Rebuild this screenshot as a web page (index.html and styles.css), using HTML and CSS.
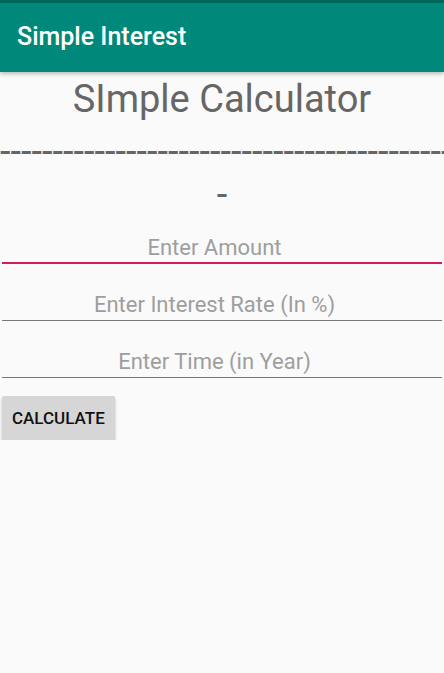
FILE: index.html
```html
<!DOCTYPE html>
<html lang="en">
<head>
    <meta charset="UTF-8">
    <meta name="viewport" content="width=device-width, initial-scale=1.0">
    <title>Simple Interest</title>
    <link rel="stylesheet" href="styles.css">
</head>
<body>
    <div class="status-bar"></div>
    <header class="app-bar">Simple Interest</header>

    <main class="content">
        <h1 class="title">SImple Calculator</h1>
        <div class="divider">----------------------------------------------------</div>
        <div class="result">-</div>

        <form id="interestForm">
            <input type="number" class="field active" placeholder="Enter Amount">
            <input type="number" class="field" placeholder="Enter Interest Rate (In %)">
            <input type="number" class="field" placeholder="Enter Time (in Year)">
            <button type="button" class="calc-btn">CALCULATE</button>
        </form>
    </main>
</body>
</html>
```

FILE: styles.css
```css
body {
    margin: 0;
    font-family: Roboto, "Liberation Sans", sans-serif;
    background-color: #fafafa;
    color: #333;
}

.status-bar {
    height: 3px;
    background-color: #00695c;
}

.app-bar {
    height: 69px;
    box-sizing: border-box;
    padding: 0 17px 2px;
    display: flex;
    align-items: center;
    background-color: #00897b;
    color: #ffffff;
    font-size: 25px;
    font-weight: 500;
    box-shadow: 0 2px 4px rgba(0, 0, 0, 0.25);
}

.content {
    padding: 0 2px;
}

.title {
    margin: 5px 0 0;
    text-align: center;
    font-size: 38px;
    font-weight: 400;
    color: #666666;
    line-height: 44px;
}

/* linha de hifens, cortada na borda */
.divider {
    margin: 0 -2px;
    overflow: hidden;
    white-space: nowrap;
    font-size: 38px;
    line-height: 60px;
    color: #666666;
}

.result {
    text-align: center;
    font-size: 38px;
    line-height: 26px;
    color: #666666;
}

.field {
    display: block;
    width: 100%;
    box-sizing: border-box;
    height: 57px;
    padding: 28px 0 4px;
    border: none;
    border-bottom: 1px solid #777777;
    background: transparent;
    text-align: center;
    font-family: Roboto, "Liberation Sans", sans-serif;
    font-size: 22px;
    outline: none;
}

.field::placeholder {
    color: #9e9e9e;
}

.field.active {
    padding-bottom: 3px;
    border-bottom: 2px solid #d81b60;
}

.calc-btn {
    margin-top: 18px;
    padding: 0 10px;
    height: 44px;
    border: none;
    border-radius: 2px;
    background-color: #d6d6d6;
    color: #111111;
    font-family: Roboto, "Liberation Sans", sans-serif;
    font-size: 17px;
    font-weight: 500;
    box-shadow: 0 2px 3px rgba(0, 0, 0, 0.25);
    cursor: pointer;
}
```
